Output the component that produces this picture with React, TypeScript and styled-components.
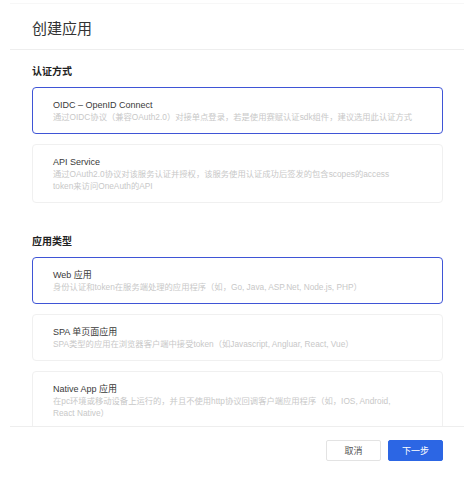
import React, { useState } from 'react';
import styled, { createGlobalStyle } from 'styled-components';

const GlobalStyle = createGlobalStyle`
  html, body {
    margin: 0;
    padding: 0;
    background: #fff;
  }
  body {
    font-family: 'Liberation Sans', Arial, 'Noto Sans CJK SC', sans-serif;
    -webkit-font-smoothing: antialiased;
  }
`;

const Modal = styled.div`
  margin: 3px 10px 0;
  height: 483px;
  display: flex;
  flex-direction: column;
  border-top: 1px solid #f7f7f7;
  background: #fff;
`;

const Header = styled.header`
  padding: 14px 22px 11px;
  border-bottom: 1px solid #eeeeee;
`;

const Title = styled.div`
  font-size: 15px;
  line-height: 20px;
  font-weight: 400;
  color: #333;
  font-family: 'Noto Sans CJK SC', sans-serif;
`;

const Body = styled.div`
  height: 377px;
  overflow: hidden;
  padding: 14px 21px 0 22px;
  box-sizing: border-box;
  border-bottom: 1px solid #eeeeee;
`;

const Section = styled.section<{ $first?: boolean }>`
  margin-top: ${(p) => (p.$first ? 0 : 31)}px;
`;

const SectionTitle = styled.h2`
  margin: 0 0 9px;
  font-size: 10px;
  line-height: 14px;
  font-weight: 600;
  color: #222;
  font-family: 'Noto Sans CJK SC', sans-serif;
`;

const OptionList = styled.div`
  display: flex;
  flex-direction: column;
  gap: 10px;
`;

const Option = styled.div<{ $active: boolean }>`
  border: 1px solid ${(p) => (p.$active ? '#3f55d6' : '#f0f0f0')};
  border-radius: 4px;
  padding: 11px 20px 10px;
  cursor: pointer;
  background: #fff;
`;

const OptionName = styled.div`
  font-size: 9px;
  line-height: 12px;
  color: #3a3a3a;
`;

const OptionDesc = styled.div`
  font-size: 8.3px;
  line-height: 12px;
  color: #c8c8c8;
  white-space: pre-line;
`;

const Footer = styled.div`
  display: flex;
  justify-content: flex-end;
  gap: 7px;
  padding: 13px 21px 0;
`;

const Button = styled.button<{ $primary?: boolean }>`
  width: 55px;
  height: 21px;
  border-radius: 2px;
  font-size: 9px;
  font-family: 'Noto Sans CJK SC', sans-serif;
  cursor: pointer;
  border: 1px solid ${(p) => (p.$primary ? '#2c66e4' : '#e3e3e3')};
  background: ${(p) => (p.$primary ? '#2c66e4' : '#fff')};
  color: ${(p) => (p.$primary ? '#fff' : '#555')};
  padding: 0;
`;

type OptionItem = { id: string; name: string; desc: string };

const authTypes: OptionItem[] = [
  {
    id: 'oidc',
    name: 'OIDC – OpenID Connect',
    desc: '通过OIDC协议（兼容OAuth2.0）对接单点登录，若是使用赛赋认证sdk组件，建议选用此认证方式',
  },
  {
    id: 'api',
    name: 'API Service',
    desc: '通过OAuth2.0协议对该服务认证并授权，该服务使用认证成功后签发的包含scopes的access\ntoken来访问OneAuth的API',
  },
];

const appTypes: OptionItem[] = [
  {
    id: 'web',
    name: 'Web 应用',
    desc: '身份认证和token在服务端处理的应用程序（如，Go, Java, ASP.Net, Node.js, PHP）',
  },
  {
    id: 'spa',
    name: 'SPA 单页面应用',
    desc: 'SPA类型的应用在浏览器客户端中接受token（如Javascript, Angluar, React, Vue）',
  },
  {
    id: 'native',
    name: 'Native App 应用',
    desc: '在pc环境或移动设备上运行的，并且不使用http协议回调客户端应用程序（如，IOS, Android,\nReact Native）',
  },
];

const OptionGroup = ({ items, value, onChange }: { items: OptionItem[]; value: string; onChange: (id: string) => void }) => (
  <OptionList>
    {items.map((item) => (
      <Option key={item.id} $active={item.id === value} onClick={() => onChange(item.id)}>
        <OptionName>{item.name}</OptionName>
        <OptionDesc>{item.desc}</OptionDesc>
      </Option>
    ))}
  </OptionList>
);

export default function App() {
  const [auth, setAuth] = useState('oidc');
  const [appType, setAppType] = useState('web');

  return (
    <>
      <GlobalStyle />
      <Modal>
        <Header>
          <Title>创建应用</Title>
        </Header>
        <Body>
          <Section $first>
            <SectionTitle>认证方式</SectionTitle>
            <OptionGroup items={authTypes} value={auth} onChange={setAuth} />
          </Section>
          <Section>
            <SectionTitle>应用类型</SectionTitle>
            <OptionGroup items={appTypes} value={appType} onChange={setAppType} />
          </Section>
        </Body>
        <Footer>
          <Button>取消</Button>
          <Button $primary>下一步</Button>
        </Footer>
      </Modal>
    </>
  );
}
